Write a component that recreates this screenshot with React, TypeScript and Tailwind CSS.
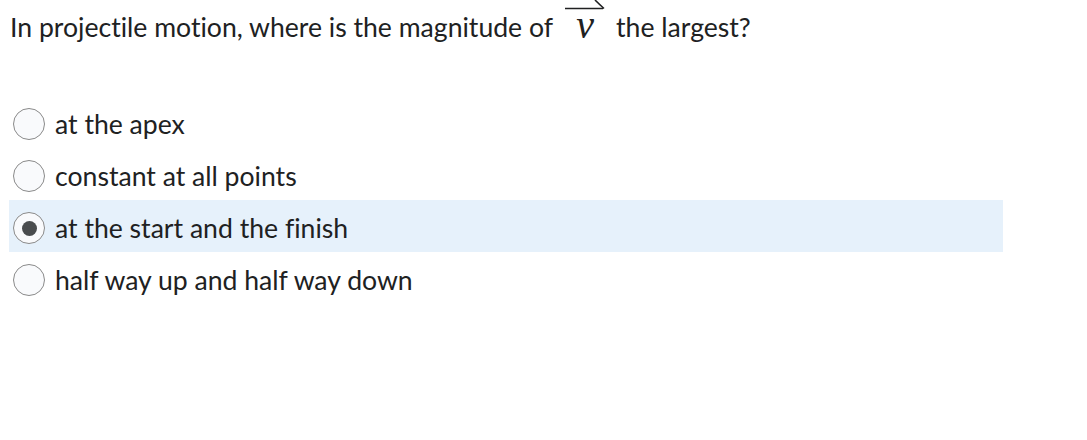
import React from 'react'

const options = [
  { label: 'at the apex', checked: false },
  { label: 'constant at all points', checked: false },
  { label: 'at the start and the finish', checked: true },
  { label: 'half way up and half way down', checked: false },
]

function Radio({ checked }: { checked: boolean }) {
  return (
    <span className="mt-[4px] flex h-[32px] w-[32px] shrink-0 items-center justify-center rounded-full border-[1.5px] border-[#8a8a8a] bg-[#f9fafc]">
      {checked && <span className="h-[15px] w-[15px] rounded-full bg-[#494c4e]" />}
    </span>
  )
}

export default function App() {
  return (
    <div className="h-[440px] w-[1087px] bg-white font-['Lato','Noto_Sans',sans-serif] text-[#202122] [font-variant-ligatures:none]">
      <div className="flex h-[56px] items-center pl-[10px] text-[26.6px]">
        <span>In projectile motion, where is the magnitude of</span>
        <span className="relative ml-[12px] mr-[11px] inline-flex w-[40px] justify-center self-stretch">
          <svg className="absolute left-0 top-0" width="40" height="12" viewBox="0 0 40 12">
            <line x1="0" y1="8.5" x2="38" y2="8.5" stroke="#202122" strokeWidth="1.6" />
            <path d="M30 0 Q35 5 39 8.5" fill="none" stroke="#202122" strokeWidth="1.6" />
          </svg>
          <span className="mt-[5px] font-['Liberation_Serif',serif] text-[40px] font-medium italic leading-none">v</span>
        </span>
        <span>the largest?</span>
      </div>
      <div className="mt-[40px] flex flex-col">
        {options.map((o) => (
          <label
            key={o.label}
            className={`ml-[9px] flex h-[52px] w-[994px] items-center gap-[10px] pl-[4px] text-[26.6px] ${o.checked ? 'bg-[#e6f1fb]' : ''}`}
          >
            <Radio checked={o.checked} />
            <span className="mt-[5px]">{o.label}</span>
          </label>
        ))}
      </div>
    </div>
  )
}
